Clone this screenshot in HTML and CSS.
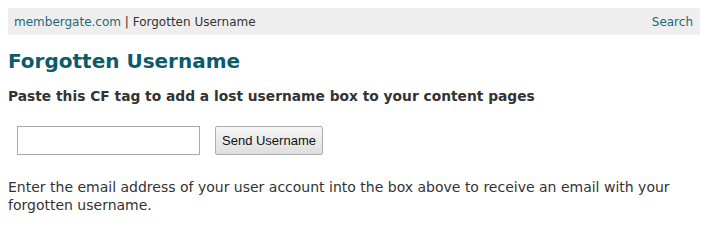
FILE: index.html
```html
<!DOCTYPE html>
<html lang="en">
<head>
  <meta charset="UTF-8">
  <title>Forgotten Username</title>
  <link rel="stylesheet" href="styles.css">
</head>
<body>

<div class="crumbs">
  <div><a href="#">membergate.com</a> | Forgotten Username</div>
  <a href="#">Search</a>
</div>

<h1>Forgotten Username</h1>
<h2>Paste this CF tag to add a lost username box to your content pages</h2>

<form class="lostForm">
  <input type="text" name="email">
  <button type="button">Send Username</button>
</form>

<p class="info">Enter the email address of your user account into the box above to receive an email with your forgotten username.</p>

</body>
</html>
```

FILE: styles.css
```css
* {
  margin: 0;
  padding: 0;
  box-sizing: border-box;
}
body {
  font-family: "DejaVu Sans", Verdana, sans-serif;
  font-size: 13px;
  color: #333;
  background: #fff;
  padding: 8px 6px 8px 8px;
}
a {
  color: #1f6a78;
  text-decoration: none;
}
.crumbs {
  display: flex;
  justify-content: space-between;
  align-items: center;
  background-color: #eee;
  height: 27px;
  padding: 0 7px 0 6px;
  font-size: 12px;
}
h1 {
  color: #0b5b6b;
  font-size: 20px;
  margin-top: 14px;
}
h2 {
  font-size: 13.8px;
  margin-top: 15px;
  color: #333;
}
.lostForm {
  display: flex;
  align-items: center;
  gap: 15px;
  margin: 22px 0 0 9px;
}
.lostForm input {
  width: 183px;
  height: 29px;
  border: 1px solid #aaa;
}
.lostForm button {
  font-family: "Liberation Sans", Arial, sans-serif;
  font-size: 13px;
  color: #111;
  height: 29px;
  padding: 0 6px;
  border: 1px solid #adadad;
  border-radius: 2px;
  background: linear-gradient(#f6f6f6, #dedede);
}
.info {
  margin-top: 23px;
  font-size: 14px;
  line-height: 18px;
}
```
